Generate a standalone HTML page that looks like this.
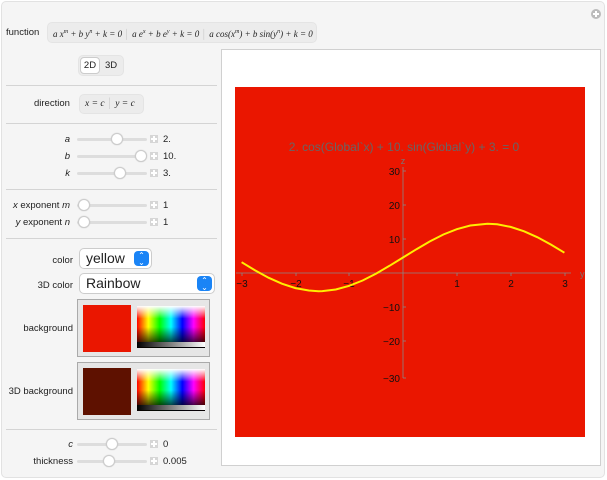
<!DOCTYPE html>
<html><head><style>
*{margin:0;padding:0;box-sizing:border-box}
body{width:607px;height:480px;background:#fff;font-family:"Liberation Sans",sans-serif;font-size:10px;color:#222;position:relative;overflow:hidden}
.frame{position:absolute;left:1px;top:1px;width:604px;height:477px;background:#f5f5f5;border:1px solid #e2e2e2;border-radius:5px}
.a{position:absolute}
.hr{position:absolute;left:6px;width:211px;height:1px;background:#d4d4d4}
.lbl{position:absolute;text-align:right;width:70px;font-size:9.5px}
.track{position:absolute;height:3px;background:#ddd;border-radius:2px;width:70px;left:77px}
.knob{position:absolute;width:12px;height:12px;border-radius:50%;background:#fff;border:1px solid #ccc;top:-5px;box-shadow:0 0 1px #bbb}
.plus{position:absolute;width:8px;height:8px;background:#d6d6d6;left:150px}
.plus:before{content:"";position:absolute;left:3px;top:1px;width:2px;height:6px;background:#fff}
.plus:after{content:"";position:absolute;left:1px;top:3px;width:6px;height:2px;background:#fff}
.val{position:absolute;left:163px;font-size:9.5px}
.seg{position:absolute;background:#ececec;border:1px solid #e4e4e4;border-radius:5px;font-family:"Liberation Serif",serif;font-style:italic;font-size:9px;white-space:nowrap}
.sel{position:absolute;background:#fff;border:1px solid #ccc;border-radius:5px;font-size:14px;padding-left:6px;line-height:19px}
.arr{position:absolute;right:2px;top:2px;width:15px;height:15px;background:#1a84f6;border-radius:4px;color:#fff;font-size:8px;text-align:center;line-height:7px;padding-top:1px}
.cp{position:absolute;left:77px;width:133px;border:1px solid #aaa;background:#e6e6e6}
.grad{position:absolute;left:59px;top:6px;width:68px;height:42px;background:linear-gradient(to bottom,rgba(255,255,255,1),rgba(255,255,255,0) 30%,rgba(0,0,0,0) 50%,#000 100%),linear-gradient(to right,red,yellow,lime,cyan,blue,magenta,red)}
.gs{position:absolute;left:59px;top:42px;width:68px;height:5px;background:linear-gradient(to right,#000,#fff)}
</style></head><body>
<div class="frame"></div>
<div class="a" style="left:591px;top:9px;width:10px;height:10px;border-radius:50%;background:#bbb"><div class="a" style="left:4px;top:2px;width:2px;height:6px;background:#fff"></div><div class="a" style="left:2px;top:4px;width:6px;height:2px;background:#fff"></div></div>

<div class="a" style="left:6px;top:27px;font-size:9.5px">function</div>
<div class="seg" style="left:47px;top:22px;width:270px;height:21px;line-height:19px;padding-left:5px;font-size:9px">a x<sup style="font-size:6px">m</sup> + b y<sup style="font-size:6px">n</sup> + k = 0 <span style="color:#ccc">│</span> a e<sup style="font-size:6px">x</sup> + b e<sup style="font-size:6px">y</sup> + k = 0 <span style="color:#ccc">│</span> a cos(x<sup style="font-size:6px">m</sup>) + b sin(y<sup style="font-size:6px">n</sup>) + k = 0</div>

<div class="seg" style="left:78px;top:55px;width:46px;height:21px"></div>
<div class="a" style="left:80px;top:57px;width:20px;height:17px;background:#fff;border:1px solid #ccc;border-radius:4px;text-align:center;line-height:15px;font-size:9.5px">2D</div>
<div class="a" style="left:105px;top:60px;font-size:9.5px">3D</div>
<div class="hr" style="top:85px"></div>

<div class="a" style="left:34px;top:98px;font-size:9.5px">direction</div>
<div class="seg" style="left:79px;top:94px;width:65px;height:20px;line-height:18px;padding-left:5px;font-size:9.5px">x = c <span style="color:#ccc">│</span> y = c</div>
<div class="hr" style="top:123px"></div>

<div class="lbl" style="left:0;top:134px;font-style:italic">a</div>
<div class="track" style="top:138px"><div class="knob" style="left:34px"></div></div><div class="plus" style="top:135px"></div><div class="val" style="top:134px">2.</div>
<div class="lbl" style="left:0;top:151px;font-style:italic">b</div>
<div class="track" style="top:155px"><div class="knob" style="left:58px"></div></div><div class="plus" style="top:152px"></div><div class="val" style="top:151px">10.</div>
<div class="lbl" style="left:0;top:168px;font-style:italic">k</div>
<div class="track" style="top:172px"><div class="knob" style="left:37px"></div></div><div class="plus" style="top:169px"></div><div class="val" style="top:168px">3.</div>
<div class="hr" style="top:189px"></div>

<div class="lbl" style="left:0;top:200px"><i>x</i> exponent <i>m</i></div>
<div class="track" style="top:204px"><div class="knob" style="left:1px"></div></div><div class="plus" style="top:201px"></div><div class="val" style="top:200px">1</div>
<div class="lbl" style="left:0;top:217px"><i>y</i> exponent <i>n</i></div>
<div class="track" style="top:221px"><div class="knob" style="left:1px"></div></div><div class="plus" style="top:218px"></div><div class="val" style="top:217px">1</div>
<div class="hr" style="top:238px"></div>

<div class="lbl" style="left:3px;top:255px">color</div>
<div class="sel" style="left:79px;top:248px;width:73px;height:21px">yellow<div class="arr">⌃<br>⌄</div></div>
<div class="lbl" style="left:3px;top:280px">3D color</div>
<div class="sel" style="left:79px;top:273px;width:136px;height:21px">Rainbow<div class="arr">⌃<br>⌄</div></div>

<div class="lbl" style="left:3px;top:323px">background</div>
<div class="cp" style="top:299px;height:58px"><div class="a" style="left:5px;top:5px;width:48px;height:47px;background:#ea1600"></div><div class="grad"></div><div class="gs"></div></div>
<div class="lbl" style="left:3px;top:386px">3D background</div>
<div class="cp" style="top:362px;height:58px"><div class="a" style="left:5px;top:5px;width:48px;height:47px;background:#5e1100"></div><div class="grad"></div><div class="gs"></div></div>
<div class="hr" style="top:429px"></div>

<div class="lbl" style="left:3px;top:439px;font-style:italic">c</div>
<div class="track" style="top:443px"><div class="knob" style="left:29px"></div></div><div class="plus" style="top:440px"></div><div class="val" style="top:439px">0</div>
<div class="lbl" style="left:3px;top:456px">thickness</div>
<div class="track" style="top:460px"><div class="knob" style="left:26px"></div></div><div class="plus" style="top:457px"></div><div class="val" style="top:456px">0.005</div>

<div class="a" style="left:221px;top:49px;width:380px;height:417px;background:#fff;border:1px solid #d0d0d0"></div>
<svg class="a" style="left:0;top:0" width="607" height="480" font-family="Liberation Sans, sans-serif">
<rect x="235" y="87" width="350" height="350" fill="#ea1600"/>
<text x="404" y="151" text-anchor="middle" font-size="12" fill="#666">2. cos(Global`x) + 10. sin(Global`y) + 3. = 0</text>
<g stroke="#888" stroke-width="0.8">
<line x1="236" y1="273" x2="571" y2="273"/>
<line x1="403" y1="167" x2="403" y2="378"/>
<line x1="242" y1="273" x2="242" y2="276"/><line x1="296" y1="273" x2="296" y2="276"/><line x1="349" y1="273" x2="349" y2="276"/><line x1="457" y1="273" x2="457" y2="276"/><line x1="511" y1="273" x2="511" y2="276"/><line x1="565" y1="273" x2="565" y2="276"/>
<line x1="403" y1="171" x2="406" y2="171"/><line x1="403" y1="205" x2="406" y2="205"/><line x1="403" y1="239" x2="406" y2="239"/><line x1="403" y1="307" x2="406" y2="307"/><line x1="403" y1="341" x2="406" y2="341"/><line x1="403" y1="378" x2="406" y2="378"/>
</g>
<g font-size="10" fill="#111" text-anchor="middle">
<text x="242" y="287">−3</text><text x="296" y="287">−2</text><text x="349" y="287">−1</text><text x="457" y="287">1</text><text x="511" y="287">2</text><text x="565" y="287">3</text>
</g>
<g font-size="10" fill="#111" text-anchor="end">
<text x="400" y="175">30</text><text x="400" y="209">20</text><text x="400" y="243">10</text><text x="400" y="311">−10</text><text x="400" y="345">−20</text><text x="400" y="382">−30</text>
</g>
<text x="403" y="164" font-size="9" fill="#777" text-anchor="middle">z</text>
<text x="580" y="277" font-size="9" fill="#777">y</text>
<polyline fill="none" stroke="#ffee00" stroke-width="2" points="241.6,262.2 255.1,270.4 268.5,277.7 281.9,283.7 295.4,288.1 308.8,290.5 318.5,291.2 322.3,291.1 335.8,289.5 349.2,285.8 362.6,280.5 376.1,273.6 389.5,265.8 403,257.5 416.5,249.2 429.9,241.4 443.4,234.5 456.8,229.2 470.3,225.5 487.5,223.8 497.2,224.3 510.6,226.9 524.1,231.3 537.5,237.3 551,244.6 564.4,252.7"/>
</svg>
</body></html>
